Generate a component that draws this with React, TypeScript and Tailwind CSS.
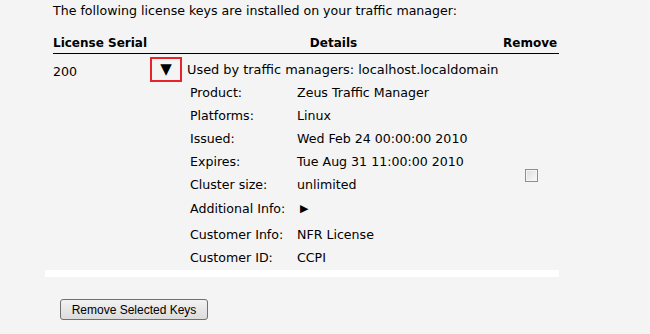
import React from 'react'

const DETAILS: [string, string][] = [
  ['Product:', 'Zeus Traffic Manager'],
  ['Platforms:', 'Linux'],
  ['Issued:', 'Wed Feb 24 00:00:00 2010'],
  ['Expires:', 'Tue Aug 31 11:00:00 2010'],
  ['Cluster size:', 'unlimited'],
]

export default function App() {
  return (
    <div className="min-h-[334px] w-[650px] bg-[#f4f4f4] text-black text-[12.6px] font-['DejaVu_Sans',Verdana,sans-serif]">
      <p className="pl-[53px] pt-[3px] leading-[15px]">
        The following license keys are installed on your traffic manager:
      </p>

      <div className="ml-[45px] mt-[18px] w-[514px]">
        {/* header */}
        <div className="ml-[8px] flex border-b border-black pb-[2px] text-[12px] font-bold leading-[15px]">
          <div className="w-[95px]">License Serial</div>
          <div className="flex-1 pl-[16px] text-center">Details</div>
          <div className="w-[56px] text-right pr-[3px]">Remove</div>
        </div>

        {/* row */}
        <div className="ml-[8px] flex pt-[3px]">
          <div className="w-[97px] pt-[7px] leading-[15px]">200</div>
          <div className="flex-1">
            <div className="flex items-center">
              <div className="flex h-[25px] w-[32px] items-center justify-center border-2 border-[#e8242b] text-[15px] leading-none">
                ▼
              </div>
              <span className="ml-[5px] text-[12.9px] leading-[15px]">Used by traffic managers: localhost.localdomain</span>
            </div>
            <div className="ml-[40px] mt-[-1px]">
              {DETAILS.map(([label, value]) => (
                <div key={label} className="flex h-[23px] items-center leading-[15px]">
                  <span className="w-[107px]">{label}</span>
                  <span>{value}</span>
                </div>
              ))}
              <div className="flex h-[25px] items-center leading-[15px]">
                <span className="w-[110px]">Additional Info:</span>
                <span className="text-[11px] leading-none">▶</span>
              </div>
              <div className="mt-[2px] flex h-[23px] items-center leading-[15px]">
                <span className="w-[107px]">Customer Info:</span>
                <span>NFR License</span>
              </div>
              <div className="flex h-[22px] items-center leading-[15px]">
                <span className="w-[107px]">Customer ID:</span>
                <span>CCPI</span>
              </div>
            </div>
          </div>
          <div className="flex w-[56px] justify-center pt-[112px]">
            <input
              type="checkbox"
              className="h-[13px] w-[13px] appearance-none border border-[#8e8f8f] bg-gradient-to-br from-[#dcdcdc] to-[#fbfbfb] shadow-[inset_0_0_0_1px_#f4f4f4]"
            />
          </div>
        </div>

        <div className="mt-[2px] h-[7px] bg-white" />
      </div>

      <div className="ml-[60px] mt-[22px]">
        <button className="h-[21px] w-[148px] rounded-[3px] border border-[#707070] bg-gradient-to-b from-[#f2f2f2] to-[#dcdcdc] text-[12px] leading-none font-['Liberation_Sans',Arial,sans-serif]">
          Remove Selected Keys
        </button>
      </div>
    </div>
  )
}
